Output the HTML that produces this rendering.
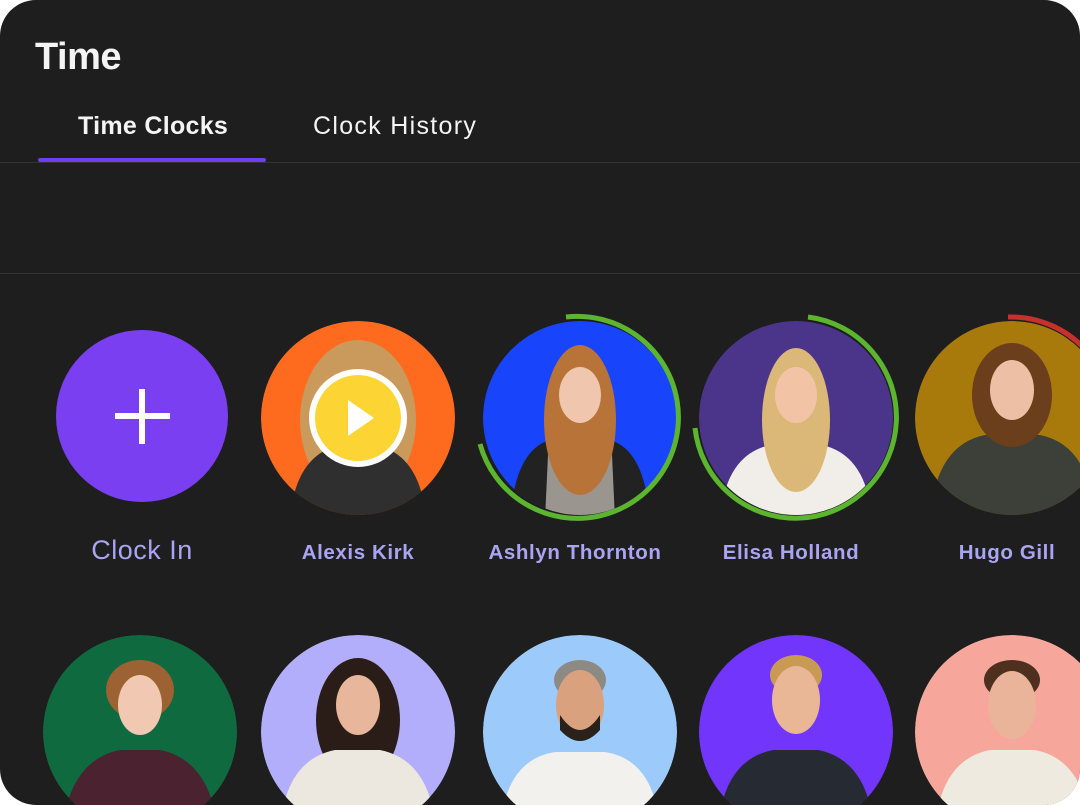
<!DOCTYPE html>
<html><head><style>
html,body{margin:0;padding:0;background:#fff;}
.wrap{position:relative;width:1080px;height:805px;background:#1e1e1e;border-radius:36px;overflow:hidden;font-family:"Liberation Sans",sans-serif;}
.t{position:absolute;color:#f4f4f4;font-weight:bold;white-space:nowrap;}
.n{position:absolute;color:#a9a5f2;font-weight:bold;font-size:20.5px;letter-spacing:0.6px;text-align:center;width:240px;top:541px;}
</style></head><body>
<div class="wrap">
<div class="t" style="left:35px;top:36px;font-size:38px;letter-spacing:-0.5px">Time</div>
<div class="t" style="left:78px;top:112px;font-size:25px;letter-spacing:0.3px">Time Clocks</div>
<div class="t" style="left:313px;top:112px;font-size:25px;font-weight:normal;letter-spacing:1.3px">Clock History</div>
<div style="position:absolute;left:0;top:162px;width:1080px;height:1px;background:#333"></div>
<div style="position:absolute;left:38px;top:158px;width:228px;height:4px;background:#6d3ef0;border-radius:2px"></div>
<div style="position:absolute;left:0;top:273px;width:1080px;height:1px;background:#333"></div>
<svg width="1080" height="805" style="position:absolute;left:0;top:0">
<defs>
<clipPath id="c1"><circle cx="358" cy="418" r="97"/></clipPath>
<clipPath id="c2"><circle cx="580" cy="418" r="97"/></clipPath>
<clipPath id="c3"><circle cx="796" cy="418" r="97"/></clipPath>
<clipPath id="c4"><circle cx="1012" cy="418" r="97"/></clipPath>
<clipPath id="d0"><circle cx="140" cy="732" r="97"/></clipPath>
<clipPath id="d1"><circle cx="358" cy="732" r="97"/></clipPath>
<clipPath id="d2"><circle cx="580" cy="732" r="97"/></clipPath>
<clipPath id="d3"><circle cx="796" cy="732" r="97"/></clipPath>
<clipPath id="d4"><circle cx="1012" cy="732" r="97"/></clipPath>
</defs>
<circle cx="142" cy="416" r="86" fill="#7b3ff2"/>
<rect x="115" y="413" width="55" height="6" fill="#fff"/>
<rect x="139" y="389" width="6" height="55" fill="#fff"/>
<g clip-path="url(#c1)"><circle cx="358" cy="418" r="97" fill="#fe6a1e"/>
<ellipse cx="358" cy="420" rx="58" ry="80" fill="#c99a5c"/>
<path d="M290 520 Q295 455 340 445 L376 445 Q421 455 426 520Z" fill="#2f2f2f"/></g>
<circle cx="358" cy="418" r="46" fill="#fcd535" stroke="#fff" stroke-width="6"/>
<path d="M348 400 L374 418 L348 436Z" fill="#fff"/>
<g clip-path="url(#c2)"><circle cx="580" cy="418" r="97" fill="#1845fb"/>
<path d="M510 520 Q515 450 550 440 L610 440 Q645 450 650 520Z" fill="#222"/>
<path d="M545 520 L548 455 L612 455 L615 520Z" fill="#9b9590"/>
<ellipse cx="580" cy="420" rx="36" ry="75" fill="#b87338"/>
<ellipse cx="580" cy="395" rx="21" ry="28" fill="#f0c6ae"/></g>
<path d="M566 317 A101 101 0 1 1 480 444" fill="none" stroke="#5bb52f" stroke-width="5"/>
<g clip-path="url(#c3)"><circle cx="796" cy="418" r="97" fill="#4b358a"/>
<path d="M720 520 Q725 455 770 445 L822 445 Q867 455 872 520Z" fill="#f1eeea"/>
<ellipse cx="796" cy="420" rx="34" ry="72" fill="#dcb878"/>
<ellipse cx="796" cy="395" rx="21" ry="28" fill="#f3c3a6"/></g>
<path d="M808 317 A101 101 0 1 1 695 428" fill="none" stroke="#5bb52f" stroke-width="5"/>
<g clip-path="url(#c4)"><circle cx="1012" cy="418" r="97" fill="#a87a0c"/>
<path d="M930 520 Q935 445 985 435 L1040 435 Q1090 445 1095 520Z" fill="#3d4038"/>
<ellipse cx="1012" cy="395" rx="40" ry="52" fill="#6b3e1c"/>
<ellipse cx="1012" cy="390" rx="22" ry="30" fill="#edc0a6"/></g>
<path d="M1008 317 A101 101 0 0 1 1090 355" fill="none" stroke="#c9302c" stroke-width="5"/>
<g clip-path="url(#d0)"><circle cx="140" cy="732" r="97" fill="#0f6a3f"/>
<path d="M62 830 Q70 760 120 750 L160 750 Q210 760 218 830Z" fill="#4b2230"/>
<ellipse cx="140" cy="690" rx="34" ry="30" fill="#9c6234"/>
<ellipse cx="140" cy="705" rx="22" ry="30" fill="#f1c8b1"/></g>
<g clip-path="url(#d1)"><circle cx="358" cy="732" r="97" fill="#b2aefb"/>
<ellipse cx="358" cy="720" rx="42" ry="62" fill="#2a1d18"/>
<path d="M280 830 Q285 760 335 750 L380 750 Q430 760 436 830Z" fill="#ece8df"/>
<ellipse cx="358" cy="705" rx="22" ry="30" fill="#e8b69a"/></g>
<g clip-path="url(#d2)"><circle cx="580" cy="732" r="97" fill="#9ccbfb"/>
<path d="M500 830 Q505 760 555 752 L605 752 Q655 760 660 830Z" fill="#f2f1ee"/>
<ellipse cx="580" cy="680" rx="26" ry="20" fill="#8d8a84"/>
<ellipse cx="580" cy="705" rx="24" ry="35" fill="#d9a17d"/>
<path d="M560 715 Q580 745 600 715 L600 730 Q580 752 560 730Z" fill="#2a211b"/></g>
<g clip-path="url(#d3)"><circle cx="796" cy="732" r="97" fill="#7135fb"/>
<path d="M718 830 Q723 760 773 750 L818 750 Q868 760 874 830Z" fill="#262a33"/>
<ellipse cx="796" cy="675" rx="26" ry="20" fill="#c99a54"/>
<ellipse cx="796" cy="700" rx="24" ry="34" fill="#eab796"/></g>
<g clip-path="url(#d4)"><circle cx="1012" cy="732" r="97" fill="#f6a69a"/>
<path d="M935 830 Q940 760 990 750 L1035 750 Q1085 760 1090 830Z" fill="#eeeae0"/>
<ellipse cx="1012" cy="680" rx="28" ry="20" fill="#4f2f1d"/>
<ellipse cx="1012" cy="705" rx="24" ry="34" fill="#eab49a"/></g>
</svg>
<div class="n" style="left:22px;top:535px;font-size:27px;font-weight:normal;letter-spacing:0.5px">Clock In</div>
<div class="n" style="left:238px">Alexis Kirk</div>
<div class="n" style="left:455px">Ashlyn Thornton</div>
<div class="n" style="left:671px">Elisa Holland</div>
<div class="n" style="left:887px">Hugo Gill</div>
</div>
</body></html>
